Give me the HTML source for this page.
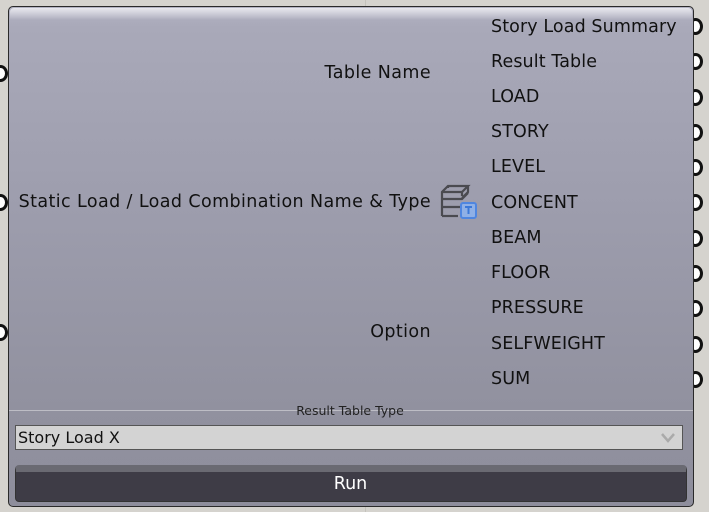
<!DOCTYPE html>
<html><head><style>
body{margin:0;width:709px;height:512px;overflow:hidden;background:#d5d3ce;font-family:"DejaVu Sans","Noto Sans CJK KR",sans-serif;position:relative}
.grid{position:absolute;background:#c4c2bc}
.panel{position:absolute;left:8px;top:6px;width:686px;height:501px;border:1.5px solid #2a2a2a;border-radius:5px;background:linear-gradient(#b3b3c3 0px,#a9a9b9 20px,#9d9dad 200px,#91919f 400px,#8e8e9c 500px);box-sizing:border-box}
.hl{position:absolute;left:10px;top:8px;width:682px;height:12px;background:linear-gradient(#e8e8ee,rgba(200,200,212,0));border-radius:4px 4px 0 0}
.t{position:absolute;font-size:17.5px;color:#111;white-space:nowrap;line-height:20px}
.r{right:278px;text-align:right;letter-spacing:0.4px}
.o{left:491px;letter-spacing:0.1px}
.port{position:absolute;width:9px;height:11px;border:3px solid #111;border-radius:50%;background:#fff}
</style></head><body>
<div class="grid" style="left:365px;top:0;width:1px;height:512px"></div>
<div class="port" style="left:-7px;top:65px"></div>
<div class="port" style="left:-7px;top:194px"></div>
<div class="port" style="left:-7px;top:324px"></div>
<div class="port" style="left:688px;top:18px"></div>
<div class="port" style="left:688px;top:53px"></div>
<div class="port" style="left:688px;top:89px"></div>
<div class="port" style="left:688px;top:124px"></div>
<div class="port" style="left:688px;top:159px"></div>
<div class="port" style="left:688px;top:194px"></div>
<div class="port" style="left:688px;top:230px"></div>
<div class="port" style="left:688px;top:265px"></div>
<div class="port" style="left:688px;top:300px"></div>
<div class="port" style="left:688px;top:336px"></div>
<div class="port" style="left:688px;top:371px"></div>
<div class="panel"></div>
<div class="hl"></div>
<div class="t r" style="top:63px">Table Name</div>
<div class="t r" style="top:192px">Static Load / Load Combination Name &amp; Type</div>
<div class="t r" style="top:322px">Option</div>
<div class="t o" style="top:17px">Story Load Summary</div>
<div class="t o" style="top:52px">Result Table</div>
<div class="t o" style="top:87px">LOAD</div>
<div class="t o" style="top:122px">STORY</div>
<div class="t o" style="top:157px">LEVEL</div>
<div class="t o" style="top:193px">CONCENT</div>
<div class="t o" style="top:228px">BEAM</div>
<div class="t o" style="top:263px">FLOOR</div>
<div class="t o" style="top:298px">PRESSURE</div>
<div class="t o" style="top:334px">SELFWEIGHT</div>
<div class="t o" style="top:369px">SUM</div>
<svg style="position:absolute;left:438px;top:182px" width="42" height="42" viewBox="0 0 42 42">
<g fill="none" stroke="#4a4a50" stroke-width="2.2">
<path d="M4 34V10L10 4H30L24 10H4M24 10V14M30 4V10L24 16"/>
<path d="M4 17H24L30 11M4 25H22M10 4V6"/>
<path d="M4 34H20"/>
</g>
<rect x="23" y="21" width="15" height="15" rx="2" fill="#8fb0e6" stroke="#4f86e0" stroke-width="2"/>
<path d="M27 25H34M30.5 25V32" stroke="#3b78d8" stroke-width="2"/>
</svg>
<div style="position:absolute;left:9px;top:410px;width:684px;height:1px;background:#bdbdc5"></div>
<div class="t" style="left:0;width:700px;text-align:center;top:401px;font-size:12.5px;color:#222">Result Table Type</div>
<div style="position:absolute;left:15px;top:425px;width:668px;height:25px;background:#d3d3d3;border:1px solid #555;box-sizing:border-box"></div>
<div class="t" style="left:18px;top:428px;font-size:16px">Story Load X</div>
<svg style="position:absolute;left:660px;top:432px" width="16" height="12"><path d="M2 2L8 9L14 2" fill="none" stroke="#aaa" stroke-width="2.5"/></svg>
<div style="position:absolute;left:15px;top:465px;width:672px;height:37px;background:#3e3c46;border:1px solid #333;border-radius:4px;box-sizing:border-box;border-top:7px solid #6a6a72"></div>
<div class="t" style="left:0;width:701px;text-align:center;top:474px;color:#fff;font-size:17.5px">Run</div>
</body></html>
